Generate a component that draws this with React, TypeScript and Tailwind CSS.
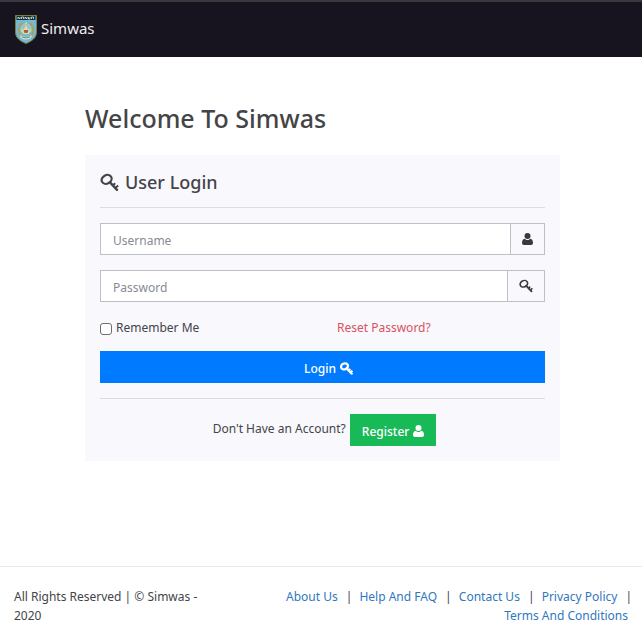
import React from "react";

function KeyIcon({ className = "", bold = false }: { className?: string; bold?: boolean }) {
  return (
    <svg viewBox="0 0 19 19" className={`inline-block shrink-0 ${className}`} fill="none" stroke="currentColor" aria-hidden="true">
      <ellipse cx="6.6" cy="6.4" rx="5.2" ry="4.2" strokeWidth={bold ? 3.4 : 2.2} transform="rotate(-28 6.6 6.4)" />
      <path d="M9.8 9.2 L17 16.800" strokeWidth={bold ? 3.6 : 2.4} strokeLinecap="round" />
      <path d="M13 12.200 L15.200 10.300 M15.600 14.800 L18.200 12.600" strokeWidth={bold ? 2.8 : 2} />
    </svg>
  );
}

function UserIcon({ className = "" }: { className?: string }) {
  return (
    <svg viewBox="0 0 11 12" className={`inline-block shrink-0 ${className}`} fill="currentColor" aria-hidden="true">
      <circle cx="5.5" cy="3" r="3" />
      <path d="M2.700 5.700C.900 6 0 7.600 0 10c0 1.300.800 2 2 2h7c1.200 0 2-.7 2-2 0-2.400-.9-4-2.700-4.300C7.500 6.500 6.500 7 5.500 7s-2-.5-2.800-1.300Z" />
    </svg>
  );
}

function Crest() {
  return (
    <svg viewBox="0 0 22 29" className="h-[29px] w-[22px] shrink-0" aria-hidden="true">
      <path d="M.5.500H21.500V17C21.500 23 17 26 11 28.500C5 26 .5 23 .5 17Z" fill="#74b9d2" stroke="#777b4c" />
      <path d="M1.500 1H20.500V5H1.500Z" fill="#132f32" />
      <path d="M3 4V2L5 4V2M6.500 4V2H8.500V4M10 4V2L12 4V2M13.500 2V4H15V2M16.500 4V2H18.500V4" fill="none" stroke="#dce9d8" strokeWidth=".8" />
      <path d="M7.500 8C1.500 12 3 21 9 23M14.500 8C20.500 12 19 21 13 23" fill="none" stroke="#b39c58" strokeWidth="1.700" />
      <circle cx="11" cy="14" r="5" fill="#8bc5d4" stroke="#d3cd8c" strokeWidth=".7" />
      <path d="M11 6.500L12 9H10ZM5.500 15L9 14L11 10L13 14L16.500 15L13.500 19H8.500Z" fill="#e0d9a2" />
      <path d="M8.500 15H13.500L12.500 18H9.500Z" fill="#a46045" />
      <path d="M5 20Q11 24 17 20L16 23Q11 26 6 23Z" fill="#dce3cb" />
      <path d="M7 22Q11 24 15 22" fill="none" stroke="#437e6c" strokeWidth=".8" />
    </svg>
  );
}

function Field({ label, type, children }: { label: string; type: string; children: React.ReactNode }) {
  return (
    <div className="flex h-8 border border-[#bfc0c7] bg-white">
      <input type={type} aria-label={label} placeholder={label} className="min-w-0 flex-1 bg-white pt-0.5 pl-3 outline-none placeholder:text-[#858b94]" />
      <span className="flex items-center border-l border-[#bfc0c7] bg-[#f8f8fd] px-[11px] text-[#38383d]">{children}</span>
    </div>
  );
}

const footerLinks = ["About Us", "Help And FAQ", "Contact Us", "Privacy Policy"];

export default function App() {
  return (
    <div className="flex min-h-screen flex-col bg-white font-['Noto_Sans','Open_Sans',sans-serif] text-[12px] leading-[19px] text-[#444449]">
      <header className="flex h-[57px] items-center border-t-2 border-[#39383d] bg-[#17141f] px-[15px]">
        <a href="#" className="flex items-center gap-1 text-[15px] text-[#eeeeef]">
          <Crest />
          <span className="pb-0.5">Simwas</span>
        </a>
      </header>

      <main className="flex-1 pt-11 pr-[82px] pl-[85px]">
        <h1 className="text-[25px] leading-[34px] font-medium text-[#444446]">Welcome To Simwas</h1>
        <section className="mt-5 bg-[#f8f8fd] p-[15px]">
          <h2 className="flex h-[38px] items-start gap-1.5 border-b border-[#dcdce2] text-[18px] leading-6 font-medium text-[#444449]">
            <KeyIcon className="mt-[3px] size-[19px]" />
            User Login
          </h2>
          <form className="mt-[15px]" onSubmit={(event) => event.preventDefault()}>
            <div className="flex flex-col gap-[15px]">
              <Field label="Username" type="text"><UserIcon className="h-3 w-[11px]" /></Field>
              <Field label="Password" type="password"><KeyIcon className="size-[14px]" /></Field>
            </div>
            <div className="mt-4 grid grid-cols-[237px_1fr]">
              <label className="flex items-center gap-1">
                <input type="checkbox" className="mt-0.5 size-3 appearance-none rounded-[3px] border border-[#6f6f73] bg-white checked:bg-[#007bff]" />
                Remember Me
              </label>
              <a href="#" className="text-[#d95460]">Reset Password?</a>
            </div>
            <button type="submit" className="mt-[14px] flex h-8 w-full items-center justify-center gap-1 bg-[#007bff] pt-0.5 pl-3 font-medium text-white">
              Login <KeyIcon bold className="size-[13px]" />
            </button>
          </form>
          <div className="mt-[15px] flex justify-center gap-1 border-t border-[#dcdce2] pt-[15px] pl-1">
            <span className="pt-[5px]">Don't Have an Account?</span>
            <button type="button" className="flex h-8 items-center gap-1 bg-[#18b957] px-3 pt-0.5 font-medium text-white">
              Register <UserIcon className="h-3 w-[11px]" />
            </button>
          </div>
        </section>
      </main>

      <footer className="flex items-start justify-between border-t border-[#e9e9eb] pt-5 pr-[10px] pb-[15px] pl-[14px]">
        <div className="w-[32%]">All Rights Reserved | © Simwas - 2020</div>
        <nav className="w-[58%] text-right" aria-label="Footer">
          {footerLinks.map((label) => (
            <React.Fragment key={label}>
              <span className="whitespace-nowrap">
                <a href="#" className="mr-2 ml-1 text-[#3078bd]">{label}</a>|
              </span>{" "}
            </React.Fragment>
          ))}
          <a href="#" className="pr-1 whitespace-nowrap text-[#3078bd]">Terms And Conditions</a>
        </nav>
      </footer>
    </div>
  );
}
